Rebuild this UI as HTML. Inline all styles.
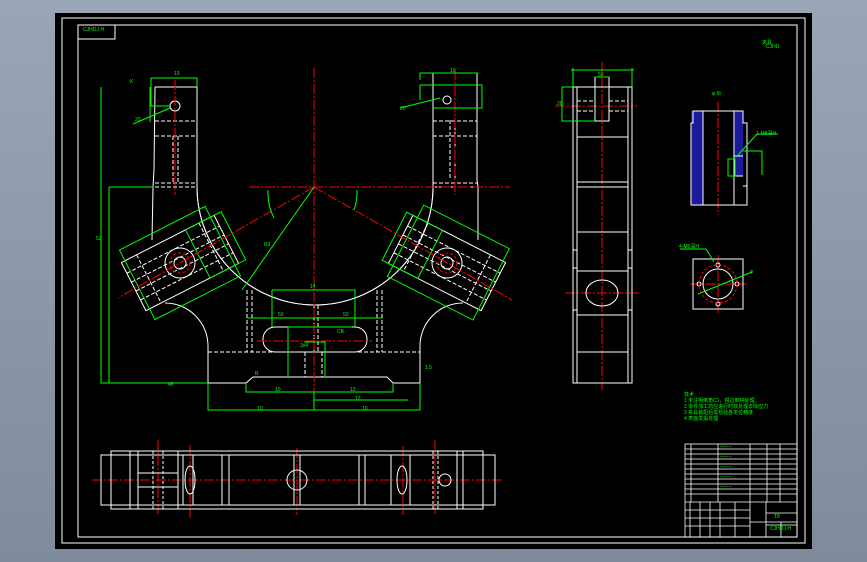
<!DOCTYPE html>
<html><head><meta charset="utf-8">
<style>
html,body{margin:0;padding:0;width:867px;height:562px;overflow:hidden;background:linear-gradient(#9aa6b8,#7f8b9c);}
svg{display:block}
text{font-family:"Liberation Sans","Noto Sans CJK SC",sans-serif;fill:#00ff00;font-size:5px}
</style></head><body>
<svg width="867" height="562" viewBox="0 0 867 562" xmlns="http://www.w3.org/2000/svg">
<rect x="55" y="13" width="757" height="536" fill="#000"/>
<g fill="none" stroke="#fff" stroke-width="1">
<rect x="62" y="18" width="743" height="525"/>
<rect x="78" y="25" width="719" height="512"/>
<path d="M78 39 H115 V25"/>
</g>
<text x="83" y="31" font-size="4">CJHDJ-H</text>

<!-- main view white -->
<g fill="none" stroke="#fff" stroke-width="1">
<path d="M155 87 H197 V187 A118 118 0 0 0 433 187 V73 H477 V180 L478 187"/>
<path d="M155 87 L154 170 L153 187 L152 240"/>
<path d="M197 187 A118 118 0 0 0 433 187"/>
<path d="M165 303 A43 43 0 0 1 208 346 V383 H246 L253 377 H387 L393 383 H420 V346 A43 43 0 0 1 463 303"/>
<path d="M478 187 L478 240"/>
</g>
<g fill="none" stroke="#fff" stroke-width="1" stroke-dasharray="4 2">
<path d="M155 121 H197 M155 136 H197 M155 183 H197 M155 187 H197 M433 121 H477 M433 136 H477 M433 183 H477 M433 187 H477"/>
<path d="M173 136 V183 M178 136 V183 M450 120 V180 M455 120 V180"/>
<path d="M208 352 H420 M247 290 V352 M252 290 V352 M377 290 V352 M382 290 V352 M314 305 V352 M318 305 V352"/>
<path d="M305 352 V377 M322 352 V377"/>
</g>
<rect x="263" y="327" width="104" height="25" rx="12" fill="none" stroke="#fff"/>
<circle cx="175" cy="106" r="5" fill="none" stroke="#fff"/>
<circle cx="447" cy="100" r="4" fill="none" stroke="#fff"/>

<!-- angled blocks -->
<g transform="rotate(-27 180 263)">
<rect x="128" y="236" width="104" height="54" fill="none" stroke="#fff"/>
<path d="M128 248 H232 M128 258 H232 M128 268 H232 M128 278 H232 M145 236 V290 M215 236 V290" stroke="#fff" fill="none" stroke-dasharray="4 2"/>
<rect x="132" y="224" width="96" height="78" fill="none" stroke="#0f0"/>
<rect x="200" y="236" width="40" height="54" fill="none" stroke="#0f0"/>
</g>
<g transform="rotate(27 447 263)">
<rect x="395" y="236" width="104" height="54" fill="none" stroke="#fff"/>
<path d="M395 248 H499 M395 258 H499 M395 268 H499 M395 278 H499 M412 236 V290 M482 236 V290" stroke="#fff" fill="none" stroke-dasharray="4 2"/>
<rect x="400" y="222" width="96" height="80" fill="none" stroke="#0f0"/>
<rect x="388" y="236" width="40" height="54" fill="none" stroke="#0f0"/>
</g>
<g fill="none" stroke="#fff">
<circle cx="180" cy="263" r="15"/><circle cx="180" cy="263" r="6"/>
<circle cx="447" cy="263" r="15"/><circle cx="447" cy="263" r="6"/>
</g>
<g fill="none" stroke="#f00" stroke-dasharray="3 2">
<circle cx="180" cy="263" r="10"/><circle cx="447" cy="263" r="10"/>
</g>

<!-- red centerlines -->
<g stroke="#f00" stroke-width="1" fill="none" stroke-dasharray="10 2 2 2">
<path d="M249 187 H510 M314 68 V400 M175 80 V195 M455 70 V195"/>
<path d="M314 187 L118 298 M314 187 L512 300"/>
<path d="M257 341 H372"/>
<path d="M602 62 V390 M555 106 H637 M565 293 H640"/>
<path d="M718 102 V215 M718 255 V315 M690 284 H747"/>
<path d="M92 480 H503 M158 440 V515 M190 445 V518 M297 448 V515 M403 446 V515 M435 440 V515"/>
</g>

<!-- green dims main -->
<g fill="none" stroke="#0f0" stroke-width="1">
<path d="M101 87 V383 H208 M109 187 V383 M109 187 H152"/>
<path d="M151 87 V78 H197 V87 M151 106 H170 M151 87 H151 V106 M150 87 V122"/>
<path d="M420 80 V73 H477 M420 85 H482 V108 H433 M420 85 V100"/>
<path d="M272 290 H355 V327 M272 290 V327 M247 318 H382"/>
<path d="M288 327 V377 M288 327 H352 M304 342 H325 V377"/>
<path d="M208 383 V410 H420 V383 M246 383 V392 H393 V383 M314 392 V410 M314 400 H408"/>
<path d="M314 187 L242 290 M133 124 L170 108 M400 108 L440 98"/>
<path d="M268 190 A56 56 0 0 0 274 218 M357 190 A52 52 0 0 1 354 210"/>
</g>
<g>
<text x="174" y="75">10</text><text x="450" y="72">10</text><text x="310" y="288">14</text>
<text x="278" y="316">50</text><text x="343" y="316">50</text><text x="337" y="333">CB</text>
<text x="300" y="347">3x4</text><text x="275" y="391">10</text><text x="350" y="391">12</text>
<text x="355" y="400">12</text><text x="257" y="410">10</text><text x="362" y="410">10</text>
<text x="168" y="386">46</text><text x="96" y="240">52</text><text x="130" y="83">K</text>
<text x="135" y="121">20</text><text x="400" y="110">20</text><text x="264" y="246">R3</text>
<text x="255" y="375">R</text><text x="425" y="369">1.5</text>
</g>

<!-- side view -->
<g fill="none" stroke="#fff">
<rect x="573" y="87" width="59" height="296"/>
<path d="M577 87 V383 M628 87 V383 M577 137 H628 M577 182 H628 M577 187 H628 M577 232 H628 M577 271 H628 M577 315 H628 M577 352 H628"/>
<path d="M573 250 H577 M573 268 H577 M628 250 H632 M628 268 H632 M573 310 H577 M628 310 H632"/>
<rect x="595" y="77" width="14" height="44"/>
<ellipse cx="602" cy="293" rx="16" ry="13"/>
</g>
<path d="M577 101 H595 M609 101 H628 M577 111 H595 M609 111 H628" stroke="#fff" stroke-dasharray="4 2"/>
<g fill="none" stroke="#0f0">
<path d="M571 70 H634 M573 68 V87 M632 68 V87 M562 87 V121 H595 M562 87 H573 M595 77 H609"/>
</g>
<text x="598" y="76">50</text><text x="557" y="105">28</text>

<!-- bushing -->
<rect x="691" y="111" width="12" height="94" fill="#1a1a9a"/>
<rect x="734" y="111" width="9" height="65" fill="#1a1a9a"/>
<g fill="none" stroke="#fff">
<path d="M693 111 H743 V123 H747 V205 H691 V123 H693 Z"/>
<path d="M703 111 V205 M734 111 V205 M734 156 H743 M734 176 H743 M743 186 H747"/>
</g>
<path d="M691 123 V205 M703 111 V205" stroke="#fff" stroke-dasharray="2 1.5" fill="none"/>
<g fill="none" stroke="#0f0"><path d="M728 159 H735 V176 H728 Z M743 151 H762 V175 M738 155 L757 134 H778"/></g>
<text x="712" y="95">φ 6t</text><text x="756" y="135">1-M8深H</text>

<!-- flange -->
<g fill="none" stroke="#fff"><rect x="693" y="259" width="50" height="50"/><circle cx="718" cy="284" r="15"/>
<circle cx="718" cy="265" r="2"/><circle cx="718" cy="304" r="2"/><circle cx="699" cy="284" r="2"/><circle cx="737" cy="284" r="2"/></g>
<circle cx="718" cy="284" r="19" fill="none" stroke="#f00" stroke-dasharray="3 2"/>
<path d="M698 294 L752 272 M680 249 H706 L714 262" stroke="#0f0" fill="none"/>
<text x="679" y="248">4-M6深H</text><text x="750" y="273">φ</text>

<!-- bottom view -->
<g fill="none" stroke="#fff">
<rect x="101" y="455" width="394" height="50"/>
<rect x="111" y="451" width="372" height="58"/>
<path d="M130 451 V509 M138 451 V509 M178 451 V509 M183 455 V505 M193 455 V505 M222 455 V505 M229 455 V505 M294 455 V505 M300 455 V505 M359 455 V505 M365 455 V505 M391 455 V505 M410 455 V505 M457 451 V509 M463 451 V509 M138 473 H178 M138 487 H178"/>
<ellipse cx="190" cy="480" rx="5" ry="14"/><ellipse cx="402" cy="480" rx="5" ry="14"/>
<circle cx="297" cy="480" r="10"/><circle cx="445" cy="480" r="6"/>
</g>
<path d="M153 451 V509 M163 451 V509 M433 451 V509 M438 451 V509" stroke="#fff" stroke-dasharray="3 2"/>

<!-- notes -->
<g font-size="4.5">
<text x="684" y="396">技术</text>
<text x="684" y="402">1 未注明倒角C1，锐边倒钝处理...</text>
<text x="684" y="408">2 零件加工前应进行时效处理去除应力</text>
<text x="684" y="414">3 夹具装配后需检验各定位精度</text>
<text x="684" y="420">4 表面发黑处理</text>
</g>

<!-- title block -->
<g fill="none" stroke="#fff" stroke-width="0.8">
<rect x="685" y="444" width="112" height="93"/>
<path d="M685 449 H797 M685 454 H797 M685 459 H797 M685 464 H797 M685 469 H797 M685 474 H797 M685 479 H797 M685 484 H797 M685 489 H797 M685 494 H797 M685 502 H797"/>
<path d="M691 444 V502 M718 444 V502 M750 444 V502 M767 444 V502 M780 444 V502"/>
<path d="M685 510 H750 M685 518 H750 M685 526 H750 M690 502 V537 M700 502 V537 M710 502 V537 M720 502 V537 M735 502 V537 M750 502 V537 M766 502 V537 M781 522 V537 M766 513 H797 M766 525 H797 M750 522 H797"/>
</g>
<g font-size="3.5" fill="#fff">
<text x="720" y="448" fill="#fff">-------</text><text x="720" y="458" fill="#fff">-------</text>
<text x="720" y="468" fill="#fff">-------</text><text x="720" y="478" fill="#fff">-------</text>
<text x="720" y="488" fill="#fff">-------</text>
</g>
<text x="774" y="518">T8</text><text x="770" y="530" font-size="4">CJHDJ-H</text>
<text x="762" y="44">夹具</text><text x="766" y="48">CJHD</text>
</svg>
</body></html>
